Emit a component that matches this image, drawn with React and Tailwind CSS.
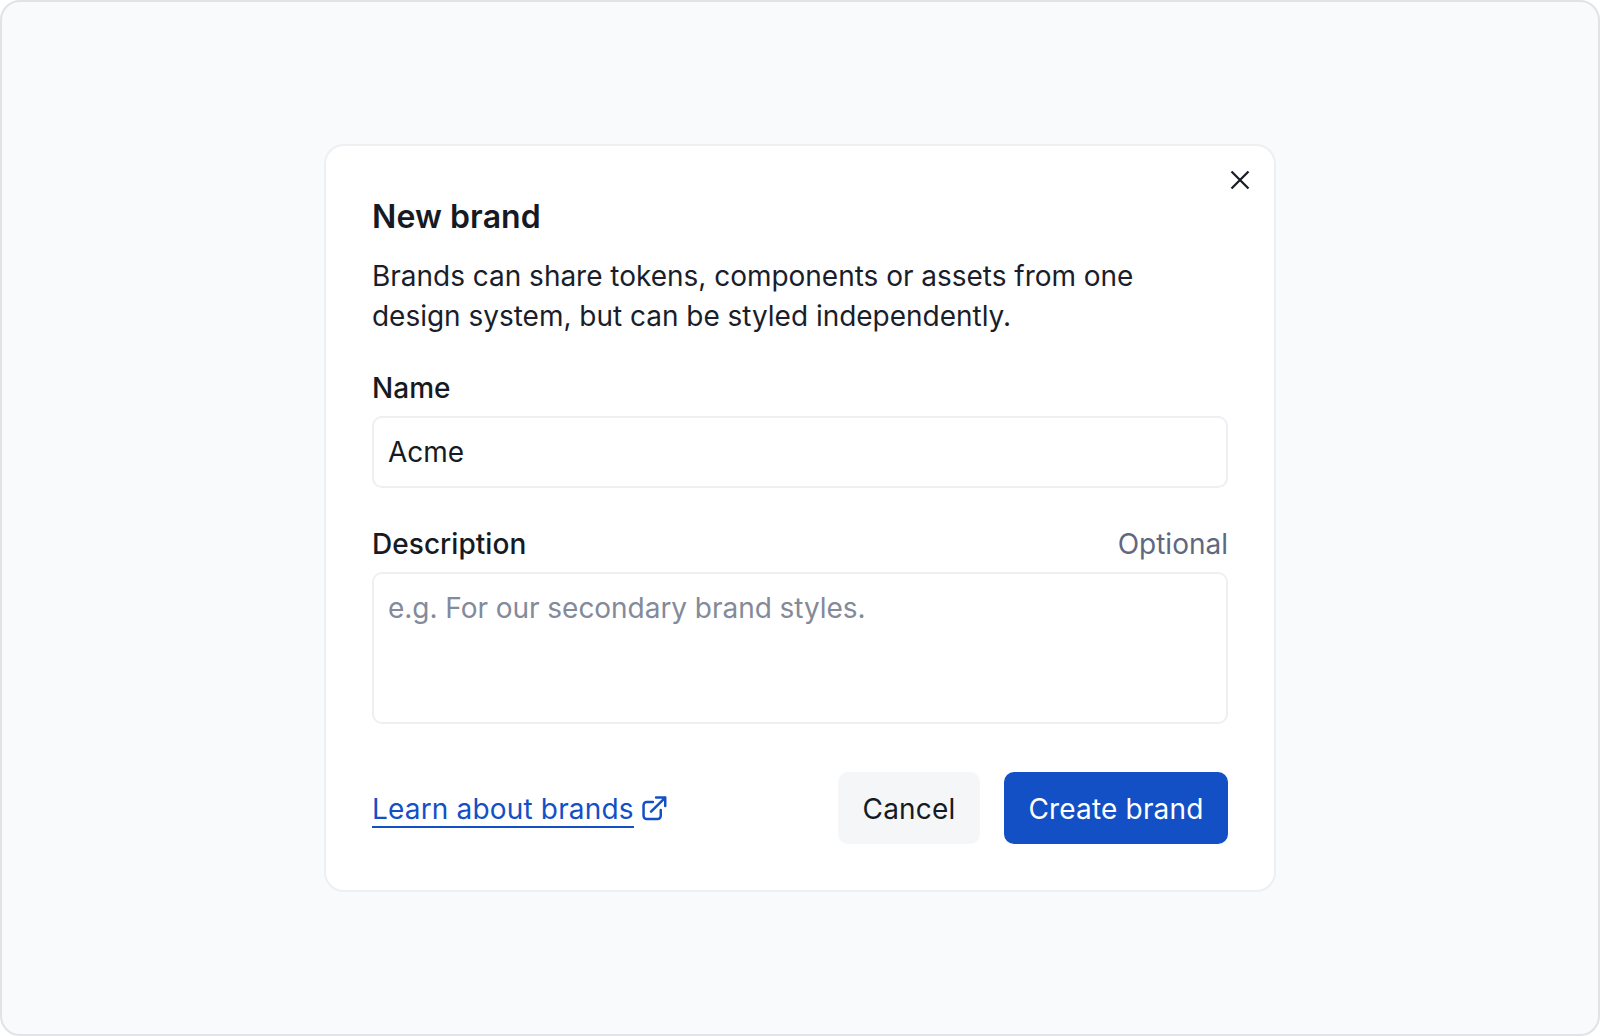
import React from "react";

const labelClass = "text-[28px] leading-[40px] font-medium text-[#161a23] tracking-[0.05px]";

export default function App() {
  return (
    <div className="w-[1600px] h-[1036px] flex items-center justify-center bg-[#f9fafb] border-2 border-[#e1e3e9] rounded-[20px] font-['Inter',sans-serif]">
      <div className="relative w-[952px] h-[748px] bg-white border-2 border-[#eeeff3] rounded-[20px] px-[46px] pt-[51px]">
        <button className="absolute top-[24px] right-[24px] w-[20px] h-[20px] text-[#161a23]" aria-label="Close">
          <svg viewBox="0 0 20 20" fill="none" stroke="currentColor" strokeWidth="2.2" className="w-full h-full">
            <path d="M1.5 1.5L18.5 18.5M18.5 1.5L1.5 18.5" />
          </svg>
        </button>

        <h2 className="text-[32px] leading-[40px] font-semibold tracking-[0.1px] text-[#161a23]">New brand</h2>
        <p className="mt-[19px] text-[28px] leading-[40px] tracking-[-0.02px] text-[#1a1e2b]">
          Brands can share tokens, components or assets from one
          <br />
          design system, but can be styled independently.
        </p>

        <label className={"block mt-[32px] " + labelClass}>Name</label>
        <input
          defaultValue="Acme"
          className="block mt-[8px] w-full h-[72px] px-[14px] text-[28px] text-[#161a23] bg-white border-2 border-[#eeeff3] rounded-[10px] outline-none"
        />

        <div className="flex items-center justify-between mt-[36px]">
          <label className={labelClass}>Description</label>
          <span className="text-[28px] leading-[40px] text-[#606880]">Optional</span>
        </div>
        <textarea
          placeholder="e.g. For our secondary brand styles."
          className="block mt-[8px] w-full h-[152px] px-[14px] py-[14px] text-[28px] leading-[40px] tracking-[-0.04px] text-[#161a23] placeholder:text-[#838a9a] bg-white border-2 border-[#eeeff3] rounded-[10px] outline-none resize-none"
        />

        <div className="flex items-center justify-between mt-[48px]">
          <a className="flex items-center gap-[8px] pt-[2px] text-[#134fc5] text-[28px] leading-[40px] tracking-[0.17px]" href="#">
            <span className="border-b-2 border-[#134fc5] leading-[34px] pt-[1px]">Learn about brands</span>
            <svg viewBox="0 0 24 24" fill="none" stroke="currentColor" strokeWidth="2.4" strokeLinecap="round" strokeLinejoin="round" className="w-[25px] h-[25px] -mt-[1px]">
              <path d="M10.5 5.8H4.5a3 3 0 0 0-3 3V19a3 3 0 0 0 3 3H15a3 3 0 0 0 3-3V13.5" />
              <path d="M8.7 15L22.3 1.5M13.5 1.5H22.3V9.7" />
            </svg>
          </a>
          <div className="flex gap-[24px]">
            <button className="w-[142px] h-[72px] pt-[1px] rounded-[10px] bg-[#f5f6f8] text-[28px] tracking-[0.2px] text-[#161a23]">Cancel</button>
            <button className="w-[224px] h-[72px] pt-[1px] rounded-[10px] bg-[#134fc5] text-[28px] tracking-[0.17px] text-white">Create brand</button>
          </div>
        </div>
      </div>
    </div>
  );
}
